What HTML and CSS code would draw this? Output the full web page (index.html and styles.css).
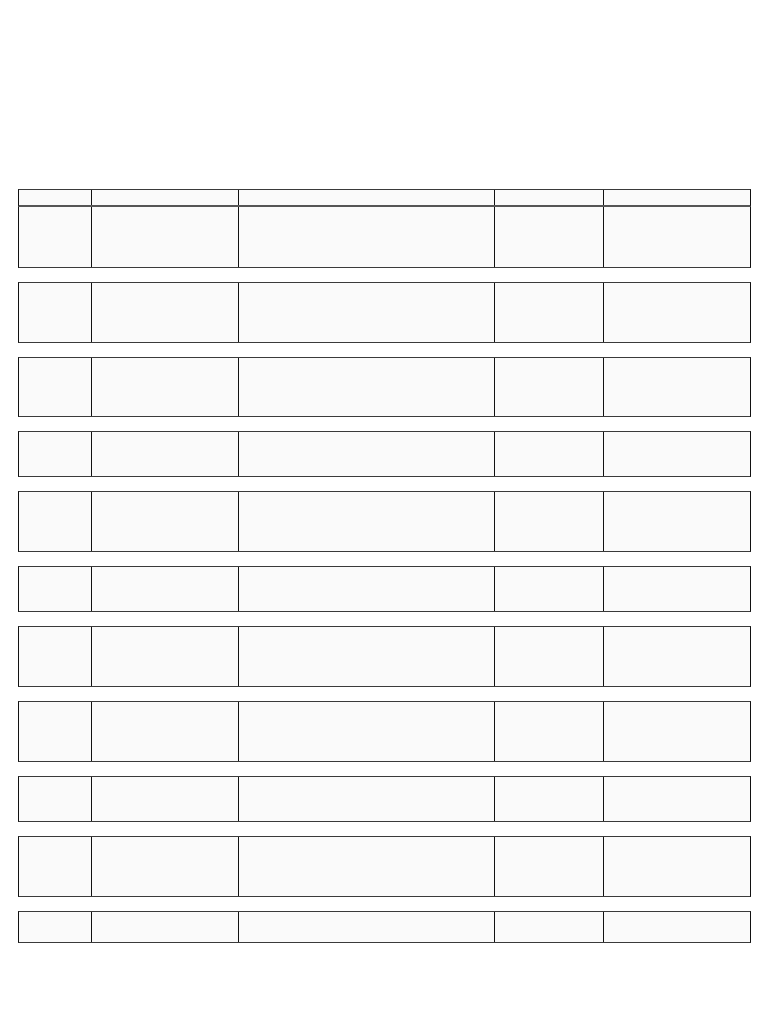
FILE: index.html
```html
<!DOCTYPE html>
<html lang="en">
<head>
<meta charset="utf-8">
<title>Table</title>
<link rel="stylesheet" href="styles.css">
</head>
<body>
<div class="page">
  <div class="table">
    <div class="row head">
      <div class="cell"></div><div class="cell"></div><div class="cell"></div><div class="cell"></div><div class="cell"></div>
    </div>
    <div class="row tall first">
      <div class="cell"></div><div class="cell"></div><div class="cell"></div><div class="cell"></div><div class="cell"></div>
    </div>
    <div class="row tall">
      <div class="cell"></div><div class="cell"></div><div class="cell"></div><div class="cell"></div><div class="cell"></div>
    </div>
    <div class="row tall">
      <div class="cell"></div><div class="cell"></div><div class="cell"></div><div class="cell"></div><div class="cell"></div>
    </div>
    <div class="row mid">
      <div class="cell"></div><div class="cell"></div><div class="cell"></div><div class="cell"></div><div class="cell"></div>
    </div>
    <div class="row tall">
      <div class="cell"></div><div class="cell"></div><div class="cell"></div><div class="cell"></div><div class="cell"></div>
    </div>
    <div class="row mid">
      <div class="cell"></div><div class="cell"></div><div class="cell"></div><div class="cell"></div><div class="cell"></div>
    </div>
    <div class="row tall">
      <div class="cell"></div><div class="cell"></div><div class="cell"></div><div class="cell"></div><div class="cell"></div>
    </div>
    <div class="row tall">
      <div class="cell"></div><div class="cell"></div><div class="cell"></div><div class="cell"></div><div class="cell"></div>
    </div>
    <div class="row mid">
      <div class="cell"></div><div class="cell"></div><div class="cell"></div><div class="cell"></div><div class="cell"></div>
    </div>
    <div class="row tall">
      <div class="cell"></div><div class="cell"></div><div class="cell"></div><div class="cell"></div><div class="cell"></div>
    </div>
    <div class="row short">
      <div class="cell"></div><div class="cell"></div><div class="cell"></div><div class="cell"></div><div class="cell"></div>
    </div>
  </div>
</div>
</body>
</html>
```

FILE: styles.css
```css
html, body {
  margin: 0;
  padding: 0;
  background: #ffffff;
  font-family: "Liberation Sans", Arial, sans-serif;
}

.page {
  padding: 189px 18px 0 18px;
}

.table {
  width: 733px;
  display: flex;
  flex-direction: column;
}

.row {
  display: grid;
  grid-template-columns: 73px 147px 256px 109px 148px;
  box-sizing: border-box;
  border: 1px solid #3a3a3a;
  border-left-color: #111111;
  border-right-color: #111111;
  background: #fafafa;
  margin-top: 14px;
}

.row.head {
  margin-top: 0;
  height: 18px;
  border-bottom: 2px solid #555555;
}

.row.first {
  margin-top: 0;
  border-top: none;
}

.row.tall { height: 60.8px; }
.row.mid { height: 46px; }
.row.short { height: 32px; }

.cell {
  border-right: 1px solid #111111;
}

.cell:last-child {
  border-right: none;
}
```
